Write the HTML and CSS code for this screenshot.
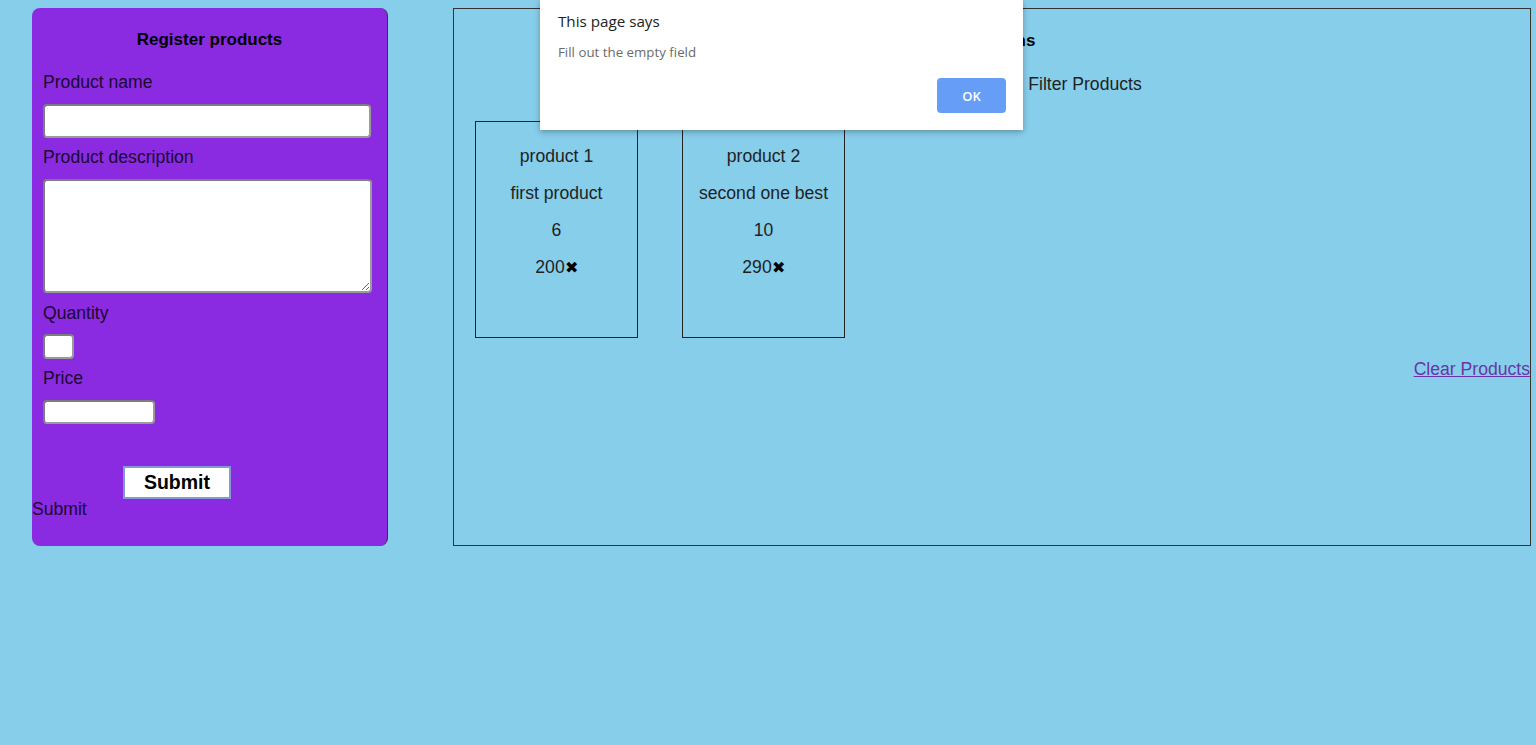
FILE: index.html
```html
<!DOCTYPE html>
<html>
<head>
    <title>Products</title>
    <link rel="stylesheet" href="styles.css">
</head>

<body>

    <div class="page">

        <form class="register-panel" onsubmit="return false;">
            <h3 class="form-title">Register products</h3>

            <label class="field-label" for="name">Product name</label>
            <input class="field-name" id="name" type="text">

            <label class="field-label" for="description">Product description</label>
            <textarea class="field-description" id="description"></textarea>

            <label class="field-label" for="quantity">Quantity</label>
            <input class="field-quantity" id="quantity" type="text">

            <label class="field-label" for="price">Price</label>
            <input class="field-price" id="price" type="text">

            <div class="submit-row">
                <button class="submit-button" type="submit">Submit</button>
            </div>
            <span class="submit-note">Submit</span>
        </form>


        <section class="products-panel">
            <h3 class="panel-title">Operations</h3>

            <div class="filter-row">
                <input class="filter-input" type="text">
                <span class="filter-label">Filter Products</span>
            </div>

            <div class="cards">
                <div class="product-card">
                    <p>product 1</p>
                    <p>first product</p>
                    <p>6</p>
                    <p>200<span class="remove">&#x2716;</span></p>
                </div>

                <div class="product-card">
                    <p>product 2</p>
                    <p>second one best</p>
                    <p>10</p>
                    <p>290<span class="remove">&#x2716;</span></p>
                </div>
            </div>

            <div class="clear-row">
                <a href="#" class="clear-link">Clear Products</a>
            </div>
        </section>

    </div>


    <!-- alert() as the browser draws it -->
    <div class="alert-box">
        <div class="alert-title">This page says</div>
        <div class="alert-message">Fill out the empty field</div>
        <div class="alert-actions">
            <button class="alert-ok">OK</button>
        </div>
    </div>

</body>
</html>
```

FILE: styles.css
```css
/* Base Styles */
body {
    font-family: 'Liberation Sans', Arial, sans-serif;
    margin: 0;
    padding: 8px 0 0;
    background-color: #87ceeb;
    color: #111;
    font-size: 17.6px;
}

.page {
    display: flex;
    gap: 65px;
    padding-left: 32px;
}

/* Register Form */
.register-panel {
    width: 356px;
    height: 538px;
    box-sizing: border-box;
    background: #8a2be2;
    border-radius: 8px;
    border-right: 1px solid #333;
    padding: 22px 11px 0;
    display: flex;
    flex-direction: column;
    align-items: flex-start;
}

.form-title {
    align-self: stretch;
    text-align: center;
    margin: 0;
    font-size: 17px;
    line-height: 20px;
    color: #000;
}

.field-label {
    line-height: 20px;
    color: #1a0830;
}

.form-title + .field-label {
    margin-top: 22px;
}

input,
textarea {
    box-sizing: border-box;
    background: white;
    border: 2px solid #9a9a9a;
    border-top-color: #7d7d7d;
    border-left-color: #7d7d7d;
    border-radius: 4px;
    font-family: inherit;
    padding: 0;
}

.field-name {
    width: 328px;
    height: 34px;
    margin: 12px 0 9px;
}

.field-description {
    width: 329px;
    height: 114px;
    margin: 12px 0 10px;
    resize: vertical;
}

.field-quantity {
    width: 31px;
    height: 25px;
    margin: 11px 0 9px;
}

.field-price {
    width: 112px;
    height: 24px;
    margin: 12px 0 0;
}

.submit-row {
    align-self: stretch;
    margin-top: 42px;
    padding-left: 80px;
}

.submit-button {
    width: 108px;
    height: 33px;
    box-sizing: border-box;
    background: white;
    border: 2px solid #8597d8;
    font-family: inherit;
    font-size: 19.5px;
    font-weight: bold;
    color: #000;
    padding: 0;
}

.submit-note {
    margin-left: -11px;
    margin-top: 0;
    line-height: 20px;
    color: #1a0830;
}

/* Products Panel */
.products-panel {
    width: 1078px;
    height: 538px;
    box-sizing: border-box;
    border: 1px solid #333;
    padding: 22px 0 0 21px;
}

.panel-title {
    margin: 0;
    text-align: center;
    font-size: 17px;
    line-height: 20px;
    color: #000;
    padding-right: 24px;
}

.filter-row {
    display: flex;
    justify-content: center;
    align-items: center;
    gap: 6px;
    margin-top: 22px;
    padding-right: 21px;
    height: 22px;
}

.filter-input {
    width: 180px;
    height: 22px;
}

.filter-label {
    line-height: 20px;
    color: #1f1f1f;
}

.cards {
    display: flex;
    gap: 44px;
    margin-top: 26px;
}

.product-card {
    width: 163px;
    height: 217px;
    box-sizing: border-box;
    border: 1px solid #222;
    padding-top: 7px;
    text-align: center;
    color: #1f1f1f;
}

.product-card p {
    margin: 17px 0;
    line-height: 20px;
}

.remove {
    font-size: 16px;
    color: #000;
}

.clear-row {
    display: flex;
    justify-content: flex-end;
    margin-top: 21px;
}

.clear-link {
    line-height: 20px;
    color: #6a35a8;
}

/* Alert Dialog */
.alert-box {
    position: absolute;
    top: 0;
    left: 540px;
    width: 483px;
    height: 130px;
    box-sizing: border-box;
    background: white;
    box-shadow: 0 2px 6px rgba(0,0,0,0.3);
    padding: 11px 17px 0 18px;
    font-family: 'Open Sans', sans-serif;
}

.alert-title {
    font-size: 15.2px;
    line-height: 20px;
    color: #202124;
}

.alert-message {
    margin-top: 11px;
    font-size: 13.3px;
    line-height: 20px;
    color: #6b6b6b;
}

.alert-actions {
    display: flex;
    justify-content: flex-end;
    margin-top: 16px;
}

.alert-ok {
    width: 69px;
    height: 35px;
    border: none;
    border-radius: 4px;
    background: #669df6;
    color: white;
    font-family: inherit;
    font-size: 13px;
    font-weight: 600;
}
```
